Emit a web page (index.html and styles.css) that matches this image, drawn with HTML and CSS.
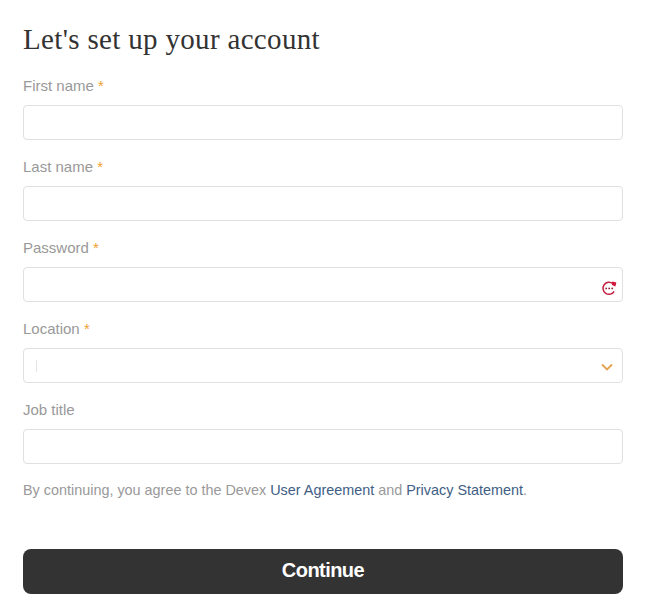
FILE: index.html
```html
<!DOCTYPE html>
<html lang="en">
<head>
    <meta charset="UTF-8">
    <meta name="viewport" content="width=device-width, initial-scale=1.0">
    <title>Set up your account</title>
    <link rel="stylesheet" href="styles.css">
</head>
<body>
    <form class="account-form">
        <h1>Let's set up your account</h1>

        <div class="field">
            <label for="firstName">First name <span class="required">*</span></label>
            <input type="text" id="firstName">
        </div>

        <div class="field">
            <label for="lastName">Last name <span class="required">*</span></label>
            <input type="text" id="lastName">
        </div>

        <div class="field">
            <label for="password">Password <span class="required">*</span></label>
            <div class="control">
                <input type="password" id="password">
                <svg class="password-icon" width="16" height="16" viewBox="0 0 16 16">
                    <path d="M13.2 11.3A6 6 0 1 1 11.8 3.6" fill="none" stroke="#c4203f" stroke-width="1.5"/>
                    <path d="M11.2 1.6L15.4 2.6L14.4 6.4L11 5Z" fill="#d0163a"/>
                    <circle cx="5.2" cy="8.4" r="0.9" fill="#8e2038"/>
                    <circle cx="8.2" cy="8.4" r="0.9" fill="#8e2038"/>
                    <circle cx="11.2" cy="8.4" r="0.9" fill="#8e2038"/>
                </svg>
            </div>
        </div>

        <div class="field">
            <label for="location">Location <span class="required">*</span></label>
            <div class="control">
                <input type="text" id="location">
                <span class="cursor"></span>
                <svg class="chevron" width="14" height="9" viewBox="0 0 14 9">
                    <path d="M2 1.5L7 6.5L12 1.5" fill="none" stroke="#e5a050" stroke-width="1.8"/>
                </svg>
            </div>
        </div>

        <div class="field">
            <label for="jobTitle">Job title</label>
            <input type="text" id="jobTitle">
        </div>

        <p class="terms">By continuing, you agree to the Devex <a href="#">User Agreement</a> and <a href="#">Privacy Statement</a>.</p>

        <button type="submit">Continue</button>
    </form>
</body>
</html>
```

FILE: styles.css
```css
* {
    box-sizing: border-box;
}
body {
    margin: 0;
    background-color: #fff;
    font-family: Arial, "Liberation Sans", sans-serif;
    color: #999;
}
.account-form {
    width: 600px;
    margin-left: 23px;
    padding-top: 22px;
}
h1 {
    margin: 0 0 19px;
    font-family: Georgia, "Liberation Serif", serif;
    font-size: 29px;
    font-weight: normal;
    line-height: 34px;
    letter-spacing: 0.33px;
    color: #333;
    white-space: nowrap;
}
.field {
    margin-bottom: 16px;
}
label {
    display: block;
    height: 30px;
    font-size: 15px;
    line-height: 22px;
}
.required {
    color: #f0a030;
}
input {
    display: block;
    width: 100%;
    height: 35px;
    padding: 0 12px;
    border: 1px solid #e0e0e0;
    border-radius: 4px;
    background-color: #fff;
    font-size: 15px;
}
.control {
    position: relative;
}
.password-icon {
    position: absolute;
    top: 13px;
    right: 6px;
}
.chevron {
    position: absolute;
    top: 15px;
    right: 9px;
}
.cursor {
    position: absolute;
    top: 12px;
    left: 13px;
    width: 1px;
    height: 12px;
    background-color: #e4e4e4;
}
.terms {
    margin: 0 0 48px;
    font-size: 14.4px;
    line-height: 21px;
}
.terms a {
    color: #405e84;
    text-decoration: none;
}
button {
    display: block;
    width: 100%;
    height: 45px;
    padding: 0 0 3px;
    border: none;
    border-radius: 8px;
    background-color: #333;
    color: #fff;
    font-family: inherit;
    font-size: 20px;
    font-weight: bold;
    letter-spacing: -0.55px;
}
```
